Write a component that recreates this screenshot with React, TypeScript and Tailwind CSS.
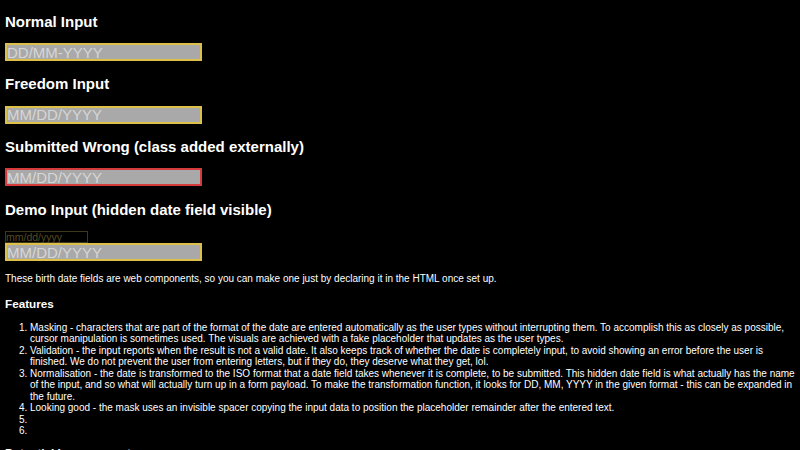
import React from "react";

// Masked date field look-alike: grey box, coloured border, fake placeholder
function DateField({
  placeholder,
  error = false,
  className = "",
}: {
  placeholder: string;
  error?: boolean;
  className?: string;
}) {
  return (
    <input
      type="text"
      placeholder={placeholder}
      className={[
        "block h-[18px] w-[197px] border-2 bg-[#a9a9a9] px-0 text-[15px] leading-[14px] text-black outline-none placeholder:text-[#d6d6d6]",
        error ? "border-[#d63b3b]" : "border-[#dcc04a]",
        className,
      ].join(" ")}
    />
  );
}

const features = [
  "Masking - characters that are part of the format of the date are entered automatically as the user types without interrupting them. To accomplish this as closely as possible, cursor manipulation is sometimes used. The visuals are achieved with a fake placeholder that updates as the user types.",
  "Validation - the input reports when the result is not a valid date. It also keeps track of whether the date is completely input, to avoid showing an error before the user is finished. We do not prevent the user from entering letters, but if they do, they deserve what they get, lol.",
  "Normalisation - the date is transformed to the ISO format that a date field takes whenever it is complete, to be submitted. This hidden date field is what actually has the name of the input, and so what will actually turn up in a form payload. To make the transformation function, it looks for DD, MM, YYYY in the given format - this can be expanded in the future.",
  "Looking good - the mask uses an invisible spacer copying the input data to position the placeholder remainder after the entered text.",
  "\u00a0",
  "\u00a0",
];

export default function App() {
  return (
    <div className="min-h-screen bg-black px-[5px] pt-[12.5px] font-['Liberation_Sans',Arial,sans-serif] text-[10px] leading-[11.5px] text-white">
      <h2 className="mb-[13.5px] text-[15px] font-bold leading-[17px]">Normal Input</h2>
      <DateField placeholder="DD/MM-YYYY" className="mb-[14.2px]" />

      <h2 className="mb-[13.5px] text-[15px] font-bold leading-[17px]">Freedom Input</h2>
      <DateField placeholder="MM/DD/YYYY" className="mb-[14.2px]" />

      <h2 className="mb-[13.5px] text-[15px] font-bold leading-[17px]">
        Submitted Wrong (class added externally)
      </h2>
      <DateField placeholder="MM/DD/YYYY" error className="mb-[14.2px]" />

      <h2 className="mb-[13.5px] text-[15px] font-bold leading-[17px]">
        Demo Input (hidden date field visible)
      </h2>
      {/* the hidden native date field, shown for the demo */}
      <div className="flex h-[12px] w-[83px] items-center border border-[#3d381c] text-[10.5px] leading-none text-[#544b22]">
        mm/dd/yyyy
      </div>
      <DateField placeholder="MM/DD/YYYY" />

      <p className="mt-[12.3px]">
        These birth date fields are web components, so you can make one just by declaring it in the HTML once set up.
      </p>

      <h3 className="mt-[12.3px] text-[11.7px] font-bold leading-[13.4px]">Features</h3>
      <ol className="mt-[11.2px] list-decimal pl-[25px]">
        {features.map((f, i) => (
          <li key={i}>{f}</li>
        ))}
      </ol>

      <h3 className="mt-[9px] text-[11.7px] font-bold leading-[13.4px]">Potential Improvements</h3>
    </div>
  );
}
